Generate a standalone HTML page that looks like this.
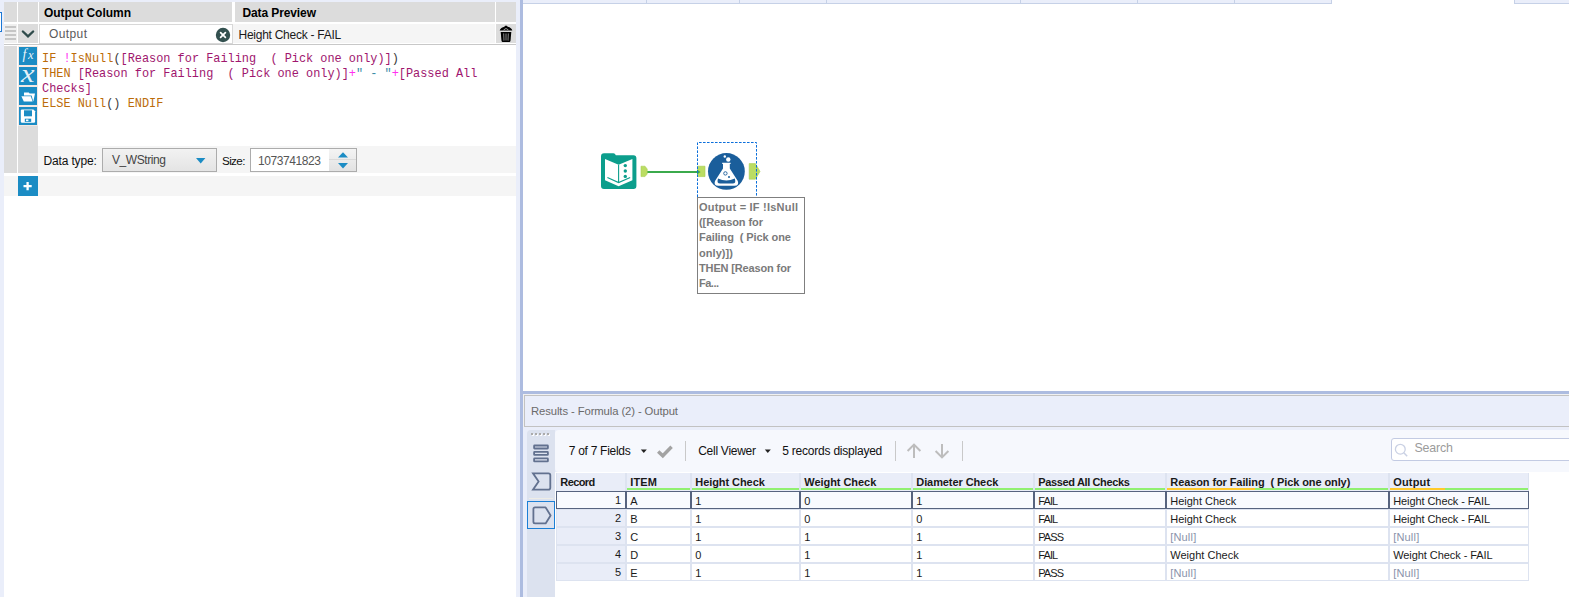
<!DOCTYPE html><html><head><meta charset="utf-8"><title>Formula</title><style>
html,body{margin:0;padding:0;}
body{width:1569px;height:597px;overflow:hidden;background:#EAEEFA;position:relative;font-family:"Liberation Sans",sans-serif;font-size:12px;}
body>div,body>svg,body>pre,body>span{position:absolute;display:block;}
span.t{white-space:nowrap;line-height:16px;height:16px;}
pre.code{margin:0;font-family:"Liberation Mono",monospace;font-size:11.9px;line-height:15px;color:#333;}
.k{color:#BC6C0A}.o{color:#FF30F0}.p{color:#3a3a3a}.f{color:#A0166E}.s{color:#3A8CA8}
</style></head><body>
<div style="left:4px;top:2px;width:512px;height:595px;background:#fff;"></div>
<div style="left:-6px;top:12px;width:8px;height:20px;background:#fff;border:1px solid #1C78D4;box-sizing:border-box;"></div>
<div style="left:4px;top:2px;width:13px;height:20px;background:#DCDCDC;"></div>
<div style="left:18px;top:2px;width:20px;height:20px;background:#DCDCDC;"></div>
<div style="left:39px;top:2px;width:193px;height:20px;background:#DCDCDC;"></div>
<div style="left:235px;top:2px;width:260px;height:20px;background:#DCDCDC;"></div>
<div style="left:496px;top:2px;width:20px;height:20px;background:#DCDCDC;"></div>
<div style="left:4px;top:24px;width:13px;height:19px;background:#EFEFEF;"></div>
<div style="left:5px;top:26px;width:11px;height:2px;background:#C6C6C6;"></div>
<div style="left:5px;top:30px;width:11px;height:2px;background:#C6C6C6;"></div>
<div style="left:5px;top:34px;width:11px;height:2px;background:#C6C6C6;"></div>
<div style="left:5px;top:38px;width:11px;height:2px;background:#C6C6C6;"></div>
<div style="left:18px;top:24px;width:20px;height:19px;background:#DCDCDC;"></div>
<svg style="left:18px;top:24px" width="20" height="19" viewBox="0 0 20 19"><path d="M4.9 7.5 L10 12.3 L15.1 7.5" fill="none" stroke="#2F4B4B" stroke-width="2.4" stroke-linecap="round" stroke-linejoin="miter"/></svg>
<div style="left:39px;top:24px;width:194px;height:20px;background:#fff;border:1px solid #D8D8D8;box-sizing:border-box;"></div>
<svg style="left:215px;top:27px" width="16" height="16" viewBox="0 0 16 16"><circle cx="8" cy="8" r="7.2" fill="#33504F"/><path d="M5.6 5.6 L10.4 10.4 M10.4 5.6 L5.6 10.4" stroke="#fff" stroke-width="1.7" stroke-linecap="round"/></svg>
<div style="left:233px;top:24px;width:262px;height:19px;background:#F5F5F5;"></div>
<div style="left:496px;top:24px;width:20px;height:19px;background:#DCDCDC;"></div>
<svg style="left:498px;top:25px" width="16" height="18" viewBox="0 0 16 18"><path d="M1.7 5.6 C1.9 3.6 4.4 2 6.6 1.7 V1.3 Q6.6 0.8 7.2 0.8 H8.8 Q9.4 0.8 9.4 1.3 V1.7 C11.6 2 14.1 3.6 14.3 5.6 Z" fill="#000"/><path d="M5.6 4.9 L8 3.5 L10.4 4.9" fill="none" stroke="#c4c4c4" stroke-width="0.8"/><path d="M2.7 7 H13.3 L12.5 15.8 C12.4 16.6 11.8 17 11 17 H5 C4.2 17 3.6 16.6 3.5 15.8 Z" fill="#000"/><path d="M5.6 8.4 L6 15.6 M8 8.4 V15.6 M10.4 8.4 L10 15.6" stroke="#6c6c6c" stroke-width="1.3" fill="none"/></svg>
<div style="left:4px;top:44px;width:512px;height:1px;background:#C8C8C8;"></div>
<div style="left:4px;top:46px;width:13px;height:127px;background:#DCDCDC;"></div>
<div style="left:18px;top:46px;width:20px;height:127px;background:#DCDCDC;"></div>
<div style="left:18px;top:46px;width:20px;height:80px;background:#F3E8E3;"></div>
<div style="left:19px;top:47px;width:18px;height:18px;background:#1B8CC4;"></div>
<div style="left:19px;top:67px;width:18px;height:18px;background:#1B8CC4;"></div>
<div style="left:19px;top:87px;width:18px;height:18px;background:#1B8CC4;"></div>
<div style="left:19px;top:107px;width:18px;height:18px;background:#1B8CC4;"></div>
<svg style="left:19px;top:47px" width="18" height="18" viewBox="0 0 18 18"><text x="3.4" y="11.8" font-family="Liberation Serif,serif" font-style="italic" font-size="14" fill="#fff" fill-opacity="0.92">f</text><text x="9" y="11.8" font-family="Liberation Serif,serif" font-style="italic" font-size="12.5" fill="#fff" fill-opacity="0.92">x</text></svg>
<svg style="left:19px;top:67px" width="18" height="18" viewBox="0 0 18 18"><text x="1.6" y="14.8" transform="scale(1.22,1)" font-family="Liberation Serif,serif" font-style="italic" font-size="25" fill="#fff" fill-opacity="0.9">x</text></svg>
<svg style="left:19px;top:87px" width="18" height="18" viewBox="0 0 18 18"><path d="M5 5.4 H9.8 L10.6 6.6 H16 L14.3 14.6 L12.6 8.4 H5 Z" fill="#fff"/><path d="M2.4 9.2 H11.8 L13.6 14.6 H4.8 Z" fill="#fff"/></svg>
<svg style="left:19px;top:107px" width="18" height="18" viewBox="0 0 18 18"><path d="M3 2.6 H14.4 L16.1 4.3 V14.5 Q16.1 15.7 14.9 15.7 H3 Q1.8 15.7 1.8 14.5 V3.8 Q1.8 2.6 3 2.6 Z" fill="#fff"/><rect x="5" y="3.3" width="8" height="6" fill="#1B8CC4"/><rect x="5.8" y="11.7" width="6.4" height="3.2" fill="#1B8CC4"/><rect x="7" y="12.5" width="2.4" height="1.7" fill="#fff"/></svg>
<div style="left:38px;top:146px;width:478px;height:27px;background:#F5F5F5;"></div>
<div style="left:102px;top:148px;width:115px;height:24px;background:linear-gradient(#F2F2F2,#E4E4E4);border:1px solid #ACACAC;box-sizing:border-box;"></div>
<svg style="left:195px;top:157px" width="12" height="8" viewBox="0 0 12 8"><path d="M1 1 H10.4 L5.7 6.4 Z" fill="#1B8CC4"/></svg>
<div style="left:250px;top:148px;width:107px;height:24px;background:#fff;border:1px solid #ACACAC;box-sizing:border-box;"></div>
<div style="left:329px;top:149px;width:27px;height:22px;background:linear-gradient(#F4F4F4,#E2E2E2);"></div>
<div style="left:329px;top:159px;width:27px;height:1px;background:#DADADA;"></div>
<svg style="left:337px;top:151px" width="12" height="8" viewBox="0 0 12 8"><path d="M1 6.6 H11 L6 1.2 Z" fill="#1B8CC4"/></svg>
<svg style="left:337px;top:162px" width="12" height="8" viewBox="0 0 12 8"><path d="M1 1 H11 L6 6.4 Z" fill="#1B8CC4"/></svg>
<div style="left:4px;top:176px;width:512px;height:20px;background:#F5F5F5;"></div>
<div style="left:18px;top:176px;width:20px;height:20px;background:#1B8CC4;"></div>
<svg style="left:18px;top:176px" width="20" height="20" viewBox="0 0 20 20"><path d="M9.6 6 V14.2 M5.5 10.1 H13.7" stroke="#fff" stroke-width="2.3"/></svg>
<pre class="code" style="left:42px;top:52px"><span class="k">IF</span> <span class="o">!</span><span class="k">IsNull</span><span class="p">(</span><span class="f">[Reason for Failing  ( Pick one only)]</span><span class="p">)</span>
<span class="k">THEN</span> <span class="f">[Reason for Failing  ( Pick one only)]</span><span class="o">+</span><span class="s">" - "</span><span class="o">+</span><span class="f">[Passed All</span>
<span class="f">Checks]</span>
<span class="k">ELSE</span> <span class="k">Null</span><span class="p">()</span> <span class="k">ENDIF</span></pre>
<div style="left:520px;top:0px;width:3px;height:597px;background:#ADBCE0;"></div>
<div style="left:520px;top:391px;width:1049px;height:3px;background:#ADBCE0;"></div>
<div style="left:523px;top:0px;width:1046px;height:391px;background:#fff;"></div>
<div style="left:523px;top:0px;width:809px;height:3px;background:#EAEEFA;"></div>
<div style="left:523px;top:3px;width:809px;height:1px;background:#C6D1E7;"></div>
<div style="left:646px;top:0px;width:1px;height:4px;background:#C6D1E7;"></div>
<div style="left:739px;top:0px;width:1px;height:4px;background:#C6D1E7;"></div>
<div style="left:826px;top:0px;width:1px;height:4px;background:#C6D1E7;"></div>
<div style="left:1020px;top:0px;width:1px;height:4px;background:#C6D1E7;"></div>
<div style="left:1137px;top:0px;width:1px;height:4px;background:#C6D1E7;"></div>
<div style="left:1234px;top:0px;width:1px;height:4px;background:#C6D1E7;"></div>
<div style="left:1331px;top:0px;width:1px;height:4px;background:#C6D1E7;"></div>
<div style="left:1514px;top:0px;width:55px;height:3px;background:#EAEEFA;"></div>
<div style="left:1514px;top:3px;width:55px;height:1px;background:#C6D1E7;"></div>
<div style="left:1514px;top:0px;width:1px;height:4px;background:#C6D1E7;"></div>
<svg style="left:598px;top:150px" width="42" height="42" viewBox="598 150 42 42">
<path d="M601 156.5 Q601 153.3 604 153.3 H613.2 Q614.6 153.3 615.2 154.3 L615.8 155.3 H633.4 Q636.4 155.3 636.4 158.3 V186 Q636.4 189 633.4 189 H604 Q601 189 601 186 Z" fill="#0C9E8C"/>
<path d="M605 159 L618.6 164.8 L632.4 159 V180.2 L618.6 186.2 L605 180.2 Z" fill="#fff"/>
<path d="M618.6 164.8 V183" stroke="#0C9E8C" stroke-width="1.1"/>
<path d="M607.4 177.6 L618.6 182.6 L630.2 177.6" fill="none" stroke="#0C9E8C" stroke-width="1.1"/>
<circle cx="625.3" cy="165.6" r="1.7" fill="#0C9E8C"/><circle cx="625.3" cy="171" r="1.7" fill="#0C9E8C"/><circle cx="625.3" cy="176.4" r="1.7" fill="#0C9E8C"/>
</svg>
<svg style="left:638px;top:140px" width="126" height="60" viewBox="638 140 126 60">
<path d="M646 172 H700" stroke="#3BAA4C" stroke-width="2"/>
<path d="M641 166.2 H645 L647.2 169 V174 L645 176.6 H641 Z" fill="#BBDD63" stroke="#A9CF52" stroke-width="0.6"/>
<path d="M697.6 166.2 H705 V176.6 H697.6 Z" fill="#BBDD63" stroke="#A9CF52" stroke-width="0.6"/>
<path d="M697 169.4 L700.6 172 L697 174.6 Z" fill="#3BAA4C"/>
<path d="M749.2 163.6 H755.4 L760 171.4 L755.4 179.2 H749.2 Z" fill="#BBDD63" stroke="#A9CF52" stroke-width="0.6"/>
</svg>
<svg style="left:696px;top:141px" width="63" height="58" viewBox="696 141 63 58"><path d="M697.5 197 V142.5 H756.5 V197" fill="none" stroke="#0B6FDB" stroke-width="1" stroke-dasharray="2.6 1.4"/></svg>
<svg style="left:706px;top:151px" width="42" height="42" viewBox="706 151 42 42">
<circle cx="726.4" cy="171.4" r="18.4" fill="#1A5E9B"/>
<path d="M722.2 162.8 H730.6 V164 H729.8 V168.4 L737.8 181 Q739.4 185.8 734.6 185.8 H718.2 Q713.4 185.8 715 181 L723 168.4 V164 H722.2 Z" fill="#fff"/>
<path d="M718 178.4 Q726.4 182.6 734.8 178.4 Q736.4 183.6 732.6 183.6 H720.2 Q716.4 183.6 718 178.4 Z" fill="#1A5E9B"/>
<circle cx="725.4" cy="173.4" r="1.7" fill="none" stroke="#1A5E9B" stroke-width="0.9"/>
<circle cx="729" cy="177" r="1" fill="#1A5E9B"/>
<circle cx="728.3" cy="159.5" r="2.2" fill="#fff"/><circle cx="724.8" cy="156.5" r="1.2" fill="#fff"/>
</svg>
<div style="left:697px;top:197px;width:108px;height:97px;background:#fff;border:1px solid #7F7F7F;box-sizing:border-box;"></div>
<div style="left:523px;top:394px;width:1046px;height:1px;background:#F1F1F1;"></div>
<div style="left:523px;top:394px;width:1px;height:33px;background:#F1F1F1;"></div>
<div style="left:524px;top:395px;width:1056px;height:32px;background:#EAEEFA;border:1px solid #C2C2C2;box-sizing:border-box;"></div>
<div style="left:527px;top:430px;width:28px;height:167px;background:#DCE2EF;border-top-left-radius:4px;"></div>
<div style="left:555px;top:430px;width:1014px;height:42px;background:#F6F8FD;border-top-left-radius:4px;border-bottom-left-radius:4px;"></div>
<div style="left:555px;top:472px;width:1014px;height:125px;background:#fff;"></div>
<div style="left:532px;top:434px;width:2px;height:2px;background:#FBFCFE;"></div>
<div style="left:531px;top:433px;width:2px;height:2px;background:#ABABAB;"></div>
<div style="left:536px;top:434px;width:2px;height:2px;background:#FBFCFE;"></div>
<div style="left:535px;top:433px;width:2px;height:2px;background:#ABABAB;"></div>
<div style="left:540px;top:434px;width:2px;height:2px;background:#FBFCFE;"></div>
<div style="left:539px;top:433px;width:2px;height:2px;background:#ABABAB;"></div>
<div style="left:544px;top:434px;width:2px;height:2px;background:#FBFCFE;"></div>
<div style="left:543px;top:433px;width:2px;height:2px;background:#ABABAB;"></div>
<div style="left:548px;top:434px;width:2px;height:2px;background:#FBFCFE;"></div>
<div style="left:547px;top:433px;width:2px;height:2px;background:#ABABAB;"></div>
<svg style="left:527px;top:430px" width="28" height="100" viewBox="527 430 28 100">
<rect x="534.1" y="445.5" width="13.8" height="3" rx="0.5" fill="none" stroke="#62718F" stroke-width="1.8"/>
<rect x="534.1" y="451.9" width="13.8" height="3" rx="0.5" fill="none" stroke="#62718F" stroke-width="1.8"/>
<rect x="534.1" y="458.4" width="13.8" height="3" rx="0.5" fill="none" stroke="#62718F" stroke-width="1.8"/>
<path d="M533 473.3 H548.4 Q550.3 473.3 550.3 475.2 V487.8 Q550.3 489.7 548.4 489.7 H533 L538.6 481.5 Z" fill="none" stroke="#62718F" stroke-width="1.8" stroke-linejoin="miter"/>
<path d="M529 498.5 H553" stroke="#EEECE6" stroke-width="1"/>
<rect x="527.5" y="501.5" width="27" height="27" fill="#DCE2EF" stroke="#1C7FD6" stroke-width="1"/>
<path d="M535 507.4 H545.6 L550.6 515.4 L545.6 523.4 H535 Q533.4 523.4 533.4 521.8 V509 Q533.4 507.4 535 507.4 Z" fill="none" stroke="#62718F" stroke-width="1.8" stroke-linejoin="round"/>
</svg>
<svg style="left:640px;top:449px" width="8" height="5" viewBox="0 0 8 5"><path d="M0.8 0.6 H6.8 L3.8 4 Z" fill="#222"/></svg>
<svg style="left:656px;top:444px" width="18" height="15" viewBox="0 0 18 15"><path d="M2.2 7.4 L6.8 11.8 L15.6 2.8" fill="none" stroke="#A3A3A3" stroke-width="3.4"/></svg>
<div style="left:685px;top:441px;width:1px;height:20px;background:#C9C9C9;"></div>
<svg style="left:764px;top:449px" width="8" height="5" viewBox="0 0 8 5"><path d="M0.8 0.6 H6.8 L3.8 4 Z" fill="#222"/></svg>
<div style="left:895px;top:441px;width:1px;height:20px;background:#C9C9C9;"></div>
<svg style="left:905px;top:442px" width="18" height="18" viewBox="0 0 18 18"><path d="M9 16 V3 M2.6 9 L9 2.6 L15.4 9" fill="none" stroke="#BDBDBD" stroke-width="2"/></svg>
<svg style="left:933px;top:442px" width="18" height="18" viewBox="0 0 18 18"><path d="M9 2 V15 M2.6 9 L9 15.4 L15.4 9" fill="none" stroke="#BDBDBD" stroke-width="2"/></svg>
<div style="left:962px;top:441px;width:1px;height:20px;background:#C9C9C9;"></div>
<div style="left:1391px;top:438px;width:189px;height:23px;background:#fff;border:1px solid #C3CBE3;border-radius:3px;box-sizing:border-box;"></div>
<svg style="left:1393px;top:442px" width="16" height="16" viewBox="0 0 16 16"><circle cx="7.3" cy="7.2" r="4.9" fill="none" stroke="#CAD1E4" stroke-width="1.3"/><path d="M10.8 10.8 L14.2 14.2" stroke="#CAD1E4" stroke-width="1.5"/></svg>
<div style="left:556px;top:473px;width:973px;height:108px;background:#DDE3F0;"></div>
<div style="left:557px;top:473px;width:68px;height:18px;background:#E9EDF8;"></div>
<div style="left:627px;top:473px;width:63px;height:18px;background:#E9EDF8;"></div>
<div style="left:627px;top:488px;width:63px;height:2px;background:#90F070;"></div>
<div style="left:692px;top:473px;width:107px;height:18px;background:#E9EDF8;"></div>
<div style="left:692px;top:488px;width:107px;height:2px;background:#90F070;"></div>
<div style="left:801px;top:473px;width:110px;height:18px;background:#E9EDF8;"></div>
<div style="left:801px;top:488px;width:110px;height:2px;background:#90F070;"></div>
<div style="left:913px;top:473px;width:120px;height:18px;background:#E9EDF8;"></div>
<div style="left:913px;top:488px;width:120px;height:2px;background:#90F070;"></div>
<div style="left:1035px;top:473px;width:130px;height:18px;background:#E9EDF8;"></div>
<div style="left:1035px;top:488px;width:130px;height:2px;background:#90F070;"></div>
<div style="left:1167px;top:473px;width:221px;height:18px;background:#E9EDF8;"></div>
<div style="left:1167px;top:488px;width:221px;height:2px;background:#90F070;"></div>
<div style="left:1390px;top:473px;width:138px;height:18px;background:#E9EDF8;"></div>
<div style="left:1390px;top:488px;width:138px;height:2px;background:#90F070;"></div>
<div style="left:1167px;top:488px;width:88px;height:2px;background:#FFCA2A;"></div>
<div style="left:1390px;top:488px;width:55px;height:2px;background:#FFCA2A;"></div>
<div style="left:556px;top:491px;width:70px;height:18px;background:#F8FAFE;border:1px solid #56637F;box-sizing:border-box;"></div>
<div style="left:626px;top:491px;width:65px;height:18px;background:#F8FAFE;border:1px solid #56637F;box-sizing:border-box;"></div>
<div style="left:691px;top:491px;width:109px;height:18px;background:#F8FAFE;border:1px solid #56637F;box-sizing:border-box;"></div>
<div style="left:800px;top:491px;width:112px;height:18px;background:#F8FAFE;border:1px solid #56637F;box-sizing:border-box;"></div>
<div style="left:912px;top:491px;width:122px;height:18px;background:#F8FAFE;border:1px solid #56637F;box-sizing:border-box;"></div>
<div style="left:1034px;top:491px;width:132px;height:18px;background:#F8FAFE;border:1px solid #56637F;box-sizing:border-box;"></div>
<div style="left:1166px;top:491px;width:223px;height:18px;background:#F8FAFE;border:1px solid #56637F;box-sizing:border-box;"></div>
<div style="left:1389px;top:491px;width:140px;height:18px;background:#F8FAFE;border:1px solid #56637F;box-sizing:border-box;"></div>
<div style="left:557px;top:510px;width:68px;height:16px;background:#E9EDF8;"></div>
<div style="left:627px;top:510px;width:63px;height:16px;background:#fff;"></div>
<div style="left:692px;top:510px;width:107px;height:16px;background:#fff;"></div>
<div style="left:801px;top:510px;width:110px;height:16px;background:#fff;"></div>
<div style="left:913px;top:510px;width:120px;height:16px;background:#fff;"></div>
<div style="left:1035px;top:510px;width:130px;height:16px;background:#fff;"></div>
<div style="left:1167px;top:510px;width:221px;height:16px;background:#fff;"></div>
<div style="left:1390px;top:510px;width:138px;height:16px;background:#fff;"></div>
<div style="left:557px;top:528px;width:68px;height:16px;background:#E9EDF8;"></div>
<div style="left:627px;top:528px;width:63px;height:16px;background:#fff;"></div>
<div style="left:692px;top:528px;width:107px;height:16px;background:#fff;"></div>
<div style="left:801px;top:528px;width:110px;height:16px;background:#fff;"></div>
<div style="left:913px;top:528px;width:120px;height:16px;background:#fff;"></div>
<div style="left:1035px;top:528px;width:130px;height:16px;background:#fff;"></div>
<div style="left:1167px;top:528px;width:221px;height:16px;background:#fff;"></div>
<div style="left:1390px;top:528px;width:138px;height:16px;background:#fff;"></div>
<div style="left:557px;top:546px;width:68px;height:16px;background:#E9EDF8;"></div>
<div style="left:627px;top:546px;width:63px;height:16px;background:#fff;"></div>
<div style="left:692px;top:546px;width:107px;height:16px;background:#fff;"></div>
<div style="left:801px;top:546px;width:110px;height:16px;background:#fff;"></div>
<div style="left:913px;top:546px;width:120px;height:16px;background:#fff;"></div>
<div style="left:1035px;top:546px;width:130px;height:16px;background:#fff;"></div>
<div style="left:1167px;top:546px;width:221px;height:16px;background:#fff;"></div>
<div style="left:1390px;top:546px;width:138px;height:16px;background:#fff;"></div>
<div style="left:557px;top:564px;width:68px;height:16px;background:#E9EDF8;"></div>
<div style="left:627px;top:564px;width:63px;height:16px;background:#fff;"></div>
<div style="left:692px;top:564px;width:107px;height:16px;background:#fff;"></div>
<div style="left:801px;top:564px;width:110px;height:16px;background:#fff;"></div>
<div style="left:913px;top:564px;width:120px;height:16px;background:#fff;"></div>
<div style="left:1035px;top:564px;width:130px;height:16px;background:#fff;"></div>
<div style="left:1167px;top:564px;width:221px;height:16px;background:#fff;"></div>
<div style="left:1390px;top:564px;width:138px;height:16px;background:#fff;"></div>
<span class="t" style="font-size:12px;top:4.50px;font-weight:bold;color:#000;letter-spacing:-0.026px;left:44.00px;">Output Column</span>
<span class="t" style="font-size:12px;top:4.50px;font-weight:bold;color:#000;letter-spacing:-0.111px;left:242.50px;">Data Preview</span>
<span class="t" style="font-size:12px;top:26.00px;color:#5a5a5a;letter-spacing:0.394px;left:49.00px;">Output</span>
<span class="t" style="font-size:12px;top:26.50px;color:#1a1a1a;letter-spacing:-0.261px;left:238.50px;">Height Check - FAIL</span>
<span class="t" style="font-size:12px;top:152.50px;color:#111;letter-spacing:-0.156px;left:43.50px;">Data type:</span>
<span class="t" style="font-size:12px;top:152.00px;color:#444;letter-spacing:-0.420px;left:112.00px;">V_WString</span>
<span class="t" style="font-size:11.7px;top:152.50px;color:#111;letter-spacing:-0.646px;left:222.00px;">Size:</span>
<span class="t" style="font-size:12px;top:152.50px;color:#555;letter-spacing:-0.417px;left:258.00px;">1073741823</span>
<span class="t" style="font-size:11px;top:199.00px;font-weight:bold;color:#7a7a7a;white-space:pre;letter-spacing:0.220px;left:699.00px;">Output = IF !IsNull</span>
<span class="t" style="font-size:11px;top:214.00px;font-weight:bold;color:#7a7a7a;white-space:pre;letter-spacing:-0.071px;left:699.00px;">([Reason for</span>
<span class="t" style="font-size:11px;top:229.00px;font-weight:bold;color:#7a7a7a;white-space:pre;letter-spacing:-0.085px;left:699.00px;">Failing  ( Pick one</span>
<span class="t" style="font-size:11px;top:245.00px;font-weight:bold;color:#7a7a7a;white-space:pre;letter-spacing:0.065px;left:699.00px;">only)])</span>
<span class="t" style="font-size:11px;top:260.00px;font-weight:bold;color:#7a7a7a;white-space:pre;letter-spacing:-0.142px;left:699.00px;">THEN [Reason for</span>
<span class="t" style="font-size:11px;top:275.00px;font-weight:bold;color:#7a7a7a;white-space:pre;letter-spacing:-0.504px;left:699.00px;">Fa...</span>
<span class="t" style="font-size:11.3px;top:403.40px;color:#6a6a6a;letter-spacing:-0.105px;left:531.00px;">Results - Formula (2) - Output</span>
<span class="t" style="font-size:12px;top:443.00px;color:#111;letter-spacing:-0.281px;left:568.70px;">7 of 7 Fields</span>
<span class="t" style="font-size:12px;top:443.00px;color:#111;letter-spacing:-0.267px;left:698.20px;">Cell Viewer</span>
<span class="t" style="font-size:12px;top:443.00px;color:#111;letter-spacing:-0.226px;left:782.30px;">5 records displayed</span>
<span class="t" style="font-size:12.4px;top:439.70px;color:#9b9b9b;letter-spacing:-0.153px;left:1414.40px;">Search</span>
<span class="t" style="font-size:11px;top:473.50px;font-weight:bold;color:#1a1a1a;white-space:pre;letter-spacing:-0.581px;left:560.30px;">Record</span>
<span class="t" style="font-size:11px;top:473.50px;font-weight:bold;color:#1a1a1a;white-space:pre;letter-spacing:0.073px;left:630.30px;">ITEM</span>
<span class="t" style="font-size:11px;top:473.50px;font-weight:bold;color:#1a1a1a;white-space:pre;letter-spacing:-0.072px;left:695.30px;">Height Check</span>
<span class="t" style="font-size:11px;top:473.50px;font-weight:bold;color:#1a1a1a;white-space:pre;letter-spacing:-0.048px;left:804.30px;">Weight Check</span>
<span class="t" style="font-size:11px;top:473.50px;font-weight:bold;color:#1a1a1a;white-space:pre;letter-spacing:-0.089px;left:916.30px;">Diameter Check</span>
<span class="t" style="font-size:11px;top:473.50px;font-weight:bold;color:#1a1a1a;white-space:pre;letter-spacing:-0.370px;left:1038.30px;">Passed All Checks</span>
<span class="t" style="font-size:11px;top:473.50px;font-weight:bold;color:#1a1a1a;white-space:pre;letter-spacing:-0.096px;left:1170.30px;">Reason for Failing  ( Pick one only)</span>
<span class="t" style="font-size:11px;top:473.50px;font-weight:bold;color:#1a1a1a;white-space:pre;letter-spacing:0.151px;left:1393.30px;">Output</span>
<span class="t" style="font-size:11px;top:492.20px;color:#1a1a1a;letter-spacing:0.000px;right:948.00px;">1</span>
<span class="t" style="font-size:11px;top:492.50px;color:#1a1a1a;letter-spacing:0.000px;left:630.20px;">A</span>
<span class="t" style="font-size:11px;top:492.50px;color:#1a1a1a;letter-spacing:0.000px;left:695.20px;">1</span>
<span class="t" style="font-size:11px;top:492.50px;color:#1a1a1a;letter-spacing:0.000px;left:804.20px;">0</span>
<span class="t" style="font-size:11px;top:492.50px;color:#1a1a1a;letter-spacing:0.000px;left:916.20px;">1</span>
<span class="t" style="font-size:11px;top:492.50px;color:#1a1a1a;letter-spacing:-0.875px;left:1038.20px;">FAIL</span>
<span class="t" style="font-size:11px;top:492.50px;color:#1a1a1a;letter-spacing:-0.004px;left:1170.20px;">Height Check</span>
<span class="t" style="font-size:11px;top:492.50px;color:#1a1a1a;letter-spacing:-0.080px;left:1393.20px;">Height Check - FAIL</span>
<span class="t" style="font-size:11px;top:510.20px;color:#1a1a1a;letter-spacing:0.000px;right:948.00px;">2</span>
<span class="t" style="font-size:11px;top:510.50px;color:#1a1a1a;letter-spacing:0.000px;left:630.20px;">B</span>
<span class="t" style="font-size:11px;top:510.50px;color:#1a1a1a;letter-spacing:0.000px;left:695.20px;">1</span>
<span class="t" style="font-size:11px;top:510.50px;color:#1a1a1a;letter-spacing:0.000px;left:804.20px;">0</span>
<span class="t" style="font-size:11px;top:510.50px;color:#1a1a1a;letter-spacing:0.000px;left:916.20px;">0</span>
<span class="t" style="font-size:11px;top:510.50px;color:#1a1a1a;letter-spacing:-0.875px;left:1038.20px;">FAIL</span>
<span class="t" style="font-size:11px;top:510.50px;color:#1a1a1a;letter-spacing:-0.004px;left:1170.20px;">Height Check</span>
<span class="t" style="font-size:11px;top:510.50px;color:#1a1a1a;letter-spacing:-0.080px;left:1393.20px;">Height Check - FAIL</span>
<span class="t" style="font-size:11px;top:528.20px;color:#1a1a1a;letter-spacing:0.000px;right:948.00px;">3</span>
<span class="t" style="font-size:11px;top:528.50px;color:#1a1a1a;letter-spacing:0.000px;left:630.20px;">C</span>
<span class="t" style="font-size:11px;top:528.50px;color:#1a1a1a;letter-spacing:0.000px;left:695.20px;">1</span>
<span class="t" style="font-size:11px;top:528.50px;color:#1a1a1a;letter-spacing:0.000px;left:804.20px;">1</span>
<span class="t" style="font-size:11px;top:528.50px;color:#1a1a1a;letter-spacing:0.000px;left:916.20px;">1</span>
<span class="t" style="font-size:11px;top:528.50px;color:#1a1a1a;letter-spacing:-0.900px;left:1038.20px;">PASS</span>
<span class="t" style="font-size:11px;top:528.50px;color:#8A93AB;letter-spacing:0.188px;left:1170.20px;">[Null]</span>
<span class="t" style="font-size:11px;top:528.50px;color:#8A93AB;letter-spacing:0.188px;left:1393.20px;">[Null]</span>
<span class="t" style="font-size:11px;top:546.20px;color:#1a1a1a;letter-spacing:0.000px;right:948.00px;">4</span>
<span class="t" style="font-size:11px;top:546.50px;color:#1a1a1a;letter-spacing:0.000px;left:630.20px;">D</span>
<span class="t" style="font-size:11px;top:546.50px;color:#1a1a1a;letter-spacing:0.000px;left:695.20px;">0</span>
<span class="t" style="font-size:11px;top:546.50px;color:#1a1a1a;letter-spacing:0.000px;left:804.20px;">1</span>
<span class="t" style="font-size:11px;top:546.50px;color:#1a1a1a;letter-spacing:0.000px;left:916.20px;">1</span>
<span class="t" style="font-size:11px;top:546.50px;color:#1a1a1a;letter-spacing:-0.875px;left:1038.20px;">FAIL</span>
<span class="t" style="font-size:11px;top:546.50px;color:#1a1a1a;letter-spacing:0.020px;left:1170.20px;">Weight Check</span>
<span class="t" style="font-size:11px;top:546.50px;color:#1a1a1a;letter-spacing:-0.065px;left:1393.20px;">Weight Check - FAIL</span>
<span class="t" style="font-size:11px;top:564.20px;color:#1a1a1a;letter-spacing:0.000px;right:948.00px;">5</span>
<span class="t" style="font-size:11px;top:564.50px;color:#1a1a1a;letter-spacing:0.000px;left:630.20px;">E</span>
<span class="t" style="font-size:11px;top:564.50px;color:#1a1a1a;letter-spacing:0.000px;left:695.20px;">1</span>
<span class="t" style="font-size:11px;top:564.50px;color:#1a1a1a;letter-spacing:0.000px;left:804.20px;">1</span>
<span class="t" style="font-size:11px;top:564.50px;color:#1a1a1a;letter-spacing:0.000px;left:916.20px;">1</span>
<span class="t" style="font-size:11px;top:564.50px;color:#1a1a1a;letter-spacing:-0.900px;left:1038.20px;">PASS</span>
<span class="t" style="font-size:11px;top:564.50px;color:#8A93AB;letter-spacing:0.188px;left:1170.20px;">[Null]</span>
<span class="t" style="font-size:11px;top:564.50px;color:#8A93AB;letter-spacing:0.188px;left:1393.20px;">[Null]</span>
</body></html>
